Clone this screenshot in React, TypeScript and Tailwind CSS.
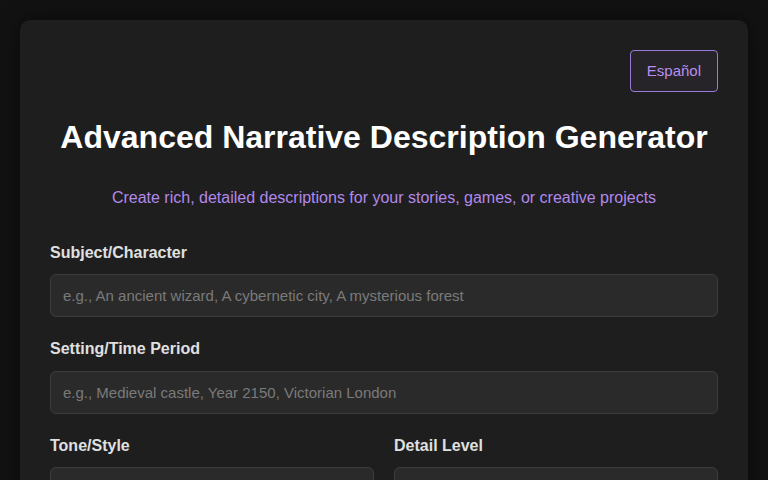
export default function App() {
  return (
    <div className="min-h-screen bg-[#121212] px-5 pt-5 font-['Liberation_Sans',Arial,sans-serif]">
      <div className="rounded-[10px] bg-[#1e1e1e] p-[30px] shadow-[0_0_20px_rgba(0,0,0,0.5)]">
        <div className="flex justify-end">
          <button
            type="button"
            className="rounded-[4px] border border-[#9a7ad8] bg-[#262428] px-4 py-[10px] text-[15px] leading-[20px] text-[#b98ef0]"
          >
            Español
          </button>
        </div>

        <h1 className="mt-[27px] text-center text-[32px] font-bold leading-[37px] text-white">
          Advanced Narrative Description Generator
        </h1>
        <p className="mt-[30px] text-center text-[16px] leading-6 text-[#b388eb]">
          Create rich, detailed descriptions for your stories, games, or creative projects
        </p>

        <div className="mt-[30.5px] flex flex-col gap-5">
          <Field label="Subject/Character" placeholder="e.g., An ancient wizard, A cybernetic city, A mysterious forest" />
          <Field label="Setting/Time Period" placeholder="e.g., Medieval castle, Year 2150, Victorian London" />
          <div className="grid grid-cols-2 gap-5">
            <Field label="Tone/Style" placeholder="" />
            <Field label="Detail Level" placeholder="" />
          </div>
        </div>
      </div>
    </div>
  );
}

function Field({ label, placeholder }: { label: string; placeholder: string }) {
  return (
    <div className="flex flex-col">
      <label className="mb-[9.5px] text-[16px] font-bold leading-6 text-[#e0e0e0]">{label}</label>
      <input
        type="text"
        placeholder={placeholder}
        className="h-[43px] w-full rounded-[6px] border border-[#3c3c3c] bg-[#2a2a2a] px-3 text-[15px] text-[#e0e0e0] outline-none placeholder:text-[#7a7a7a]"
      />
    </div>
  );
}
